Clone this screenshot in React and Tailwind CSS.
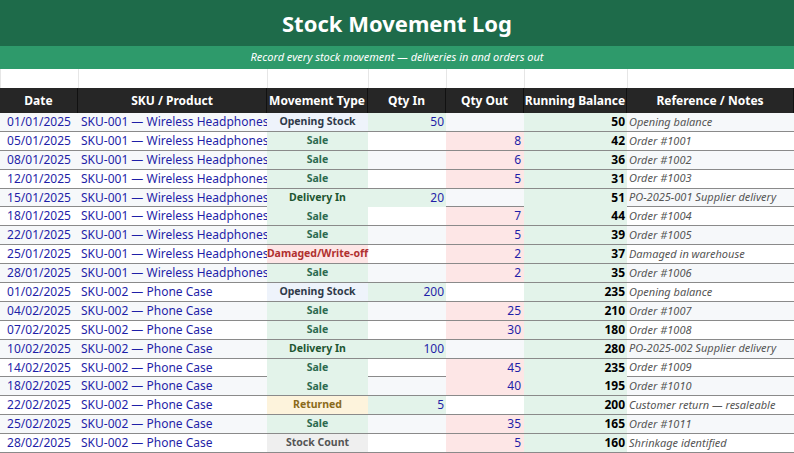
import React from 'react';

const rows = [
  ['01/01/2025', 'SKU-001 — Wireless Headphones', 'Opening Stock', 50, null, 50, 'Opening balance'],
  ['05/01/2025', 'SKU-001 — Wireless Headphones', 'Sale', null, 8, 42, 'Order #1001'],
  ['08/01/2025', 'SKU-001 — Wireless Headphones', 'Sale', null, 6, 36, 'Order #1002'],
  ['12/01/2025', 'SKU-001 — Wireless Headphones', 'Sale', null, 5, 31, 'Order #1003'],
  ['15/01/2025', 'SKU-001 — Wireless Headphones', 'Delivery In', 20, null, 51, 'PO-2025-001 Supplier delivery'],
  ['18/01/2025', 'SKU-001 — Wireless Headphones', 'Sale', null, 7, 44, 'Order #1004'],
  ['22/01/2025', 'SKU-001 — Wireless Headphones', 'Sale', null, 5, 39, 'Order #1005'],
  ['25/01/2025', 'SKU-001 — Wireless Headphones', 'Damaged/Write-off', null, 2, 37, 'Damaged in warehouse'],
  ['28/01/2025', 'SKU-001 — Wireless Headphones', 'Sale', null, 2, 35, 'Order #1006'],
  ['01/02/2025', 'SKU-002 — Phone Case', 'Opening Stock', 200, null, 235, 'Opening balance'],
  ['04/02/2025', 'SKU-002 — Phone Case', 'Sale', null, 25, 210, 'Order #1007'],
  ['07/02/2025', 'SKU-002 — Phone Case', 'Sale', null, 30, 180, 'Order #1008'],
  ['10/02/2025', 'SKU-002 — Phone Case', 'Delivery In', 100, null, 280, 'PO-2025-002 Supplier delivery'],
  ['14/02/2025', 'SKU-002 — Phone Case', 'Sale', null, 45, 235, 'Order #1009'],
  ['18/02/2025', 'SKU-002 — Phone Case', 'Sale', null, 40, 195, 'Order #1010'],
  ['22/02/2025', 'SKU-002 — Phone Case', 'Returned', 5, null, 200, 'Customer return — resaleable'],
  ['25/02/2025', 'SKU-002 — Phone Case', 'Sale', null, 35, 165, 'Order #1011'],
  ['28/02/2025', 'SKU-002 — Phone Case', 'Stock Count', null, 5, 160, 'Shrinkage identified'],
];

const typeStyle = {
  'Opening Stock': 'bg-[#eef3fb] text-[#2f3a4a]',
  Sale: 'bg-[#e3f3ea] text-[#2d6a4f]',
  'Delivery In': 'bg-[#e3f3ea] text-[#1e5631]',
  'Damaged/Write-off': 'bg-[#fde6e6] text-[#b0302f]',
  Returned: 'bg-[#fdf3dc] text-[#8a6a1a]',
  'Stock Count': 'bg-[#efefef] text-[#555]',
};

const cols = 'grid grid-cols-[78px_189px_101px_78px_78px_103px_167px]';

export default function App() {
  return (
    <div className="w-[794px] h-[453px] overflow-hidden bg-white font-['Liberation_Sans'] text-[12px]">
      <div className="h-[46px] bg-[#1e6b4a] flex items-center justify-center text-white font-bold text-[22px]">
        Stock Movement Log
      </div>
      <div className="h-[23px] bg-[#2e9a6b] flex items-center justify-center text-white italic text-[11px]">
        Record every stock movement — deliveries in and orders out
      </div>
      <div className={`${cols} h-[19px]`}>
        {[0, 1, 2, 3, 4, 5, 6].map((i) => (
          <div key={i} className="border-l border-[#e6e6e6]" />
        ))}
      </div>
      <div className={`${cols} h-[25px] bg-[#262626] text-white font-bold text-[12px]`}>
        {['Date', 'SKU / Product', 'Movement Type', 'Qty In', 'Qty Out', 'Running Balance', 'Reference / Notes'].map((h) => (
          <div key={h} className="flex items-center justify-center border-r border-[#111] whitespace-nowrap">{h}</div>
        ))}
      </div>
      {rows.map(([date, sku, type, qin, qout, bal, note], i) => {
        const base = i % 2 === 0 ? 'bg-[#f6f8fa]' : 'bg-white';
        return (
          <div key={i} className={`${cols} h-[18.9px] border-b border-[#8a8a8a] ${base} whitespace-nowrap`}>
            <div className="flex items-center justify-center text-[#1f1fa8]">{date}</div>
            <div className="flex items-center pl-[3px] text-[#1f1fa8]">{sku}</div>
            <div className={`flex items-center justify-center font-bold text-[10.5px] ${typeStyle[type]}`}>{type}</div>
            <div className={`flex items-center justify-end pr-[2px] text-[#1f1fa8] ${qin != null ? 'bg-[#e3f3ea]' : ''}`}>{qin}</div>
            <div className={`flex items-center justify-end pr-[3px] text-[#1f1fa8] ${qout != null ? 'bg-[#fde6e6]' : ''}`}>{qout}</div>
            <div className="flex items-center justify-end pr-[2px] bg-[#e3f3ea] font-bold text-black">{bal}</div>
            <div className="flex items-center pl-[2px] italic text-[#555] text-[11px]">{note}</div>
          </div>
        );
      })}
    </div>
  );
}
